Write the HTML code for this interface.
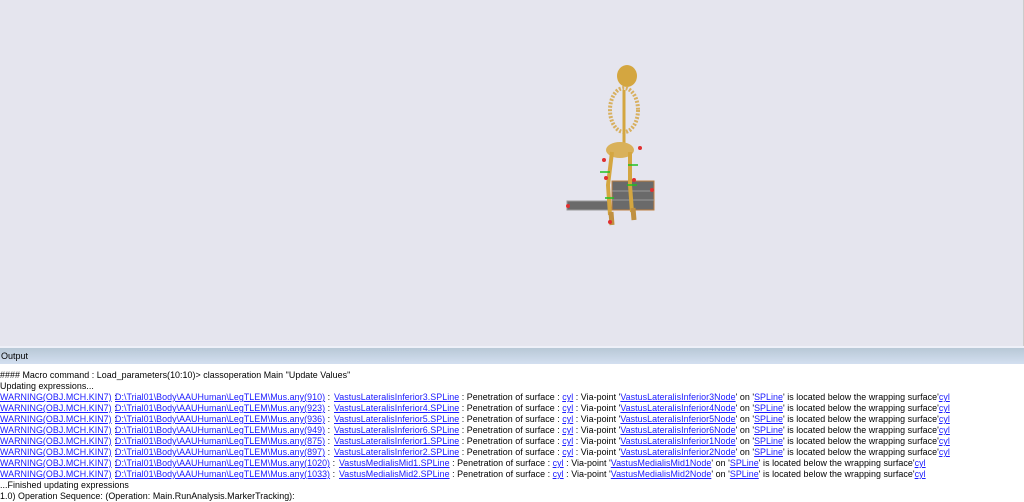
<!DOCTYPE html>
<html><head><style>
body{margin:0;width:1024px;height:500px;overflow:hidden;background:#fff;font-family:"Liberation Sans","Noto Sans CJK SC",sans-serif;}
#vp{position:absolute;left:0;top:0;width:1024px;height:346px;background:#e5e5ee;border-right:1px solid #ccc;box-sizing:border-box}
#sep{position:absolute;left:0;top:346px;width:1024px;height:2px;background:#eef0f8}
#hdr{position:absolute;left:0;top:348px;width:1024px;height:16px;background:linear-gradient(#b8c8d6,#d3dff0);font-size:9px;line-height:16px;padding-left:1px;color:#000}
.l{position:absolute;left:0;font-size:8.9px;white-space:nowrap;color:#000;height:11px;line-height:11px;letter-spacing:0.05px}
.l span{position:absolute;top:0}
a{color:#1a1aff;text-decoration:underline}
</style></head><body>
<div id="vp">
<svg width="1024" height="346" style="position:absolute;left:0;top:0">
 <rect x="567" y="201" width="42" height="9" fill="#6a6a6a" stroke="#999" stroke-width="1"/>
 <rect x="612" y="181" width="42" height="29" fill="#6a6a6a" stroke="#c08040" stroke-width="1"/>
 <line x1="612" y1="191" x2="654" y2="191" stroke="#999"/>
 <line x1="612" y1="200" x2="654" y2="200" stroke="#999"/>
 <ellipse cx="627" cy="76" rx="10" ry="11" fill="#d4a640"/>
 <ellipse cx="624" cy="110" rx="14" ry="22" fill="none" stroke="#d8b060" stroke-width="4" stroke-dasharray="2 1.5"/>
 <line x1="624" y1="90" x2="624" y2="145" stroke="#d4a640" stroke-width="3"/>
 <ellipse cx="620" cy="150" rx="14" ry="8" fill="#d9b15a"/>
 <path d="M612 152 L608 185 L610 215 M630 152 L630 185 L632 212" stroke="#d4a640" stroke-width="4" fill="none"/>
 <path d="M611 212 L612 225 M633 208 L634 220" stroke="#c09040" stroke-width="5"/>
 <g fill="#e03030"><circle cx="604" cy="160" r="2"/><circle cx="640" cy="148" r="2"/><circle cx="606" cy="178" r="2"/><circle cx="634" cy="180" r="2"/><circle cx="568" cy="206" r="2"/><circle cx="610" cy="222" r="2"/><circle cx="652" cy="190" r="2"/></g>
 <g stroke="#20c020" stroke-width="1.5"><line x1="600" y1="172" x2="610" y2="172"/><line x1="627" y1="185" x2="637" y2="185"/><line x1="605" y1="198" x2="614" y2="198"/><line x1="628" y1="165" x2="638" y2="165"/></g>
</svg>
</div>
<div id="sep"></div>
<div id="hdr">Output</div>
<div class="l" style="top:370px">#### Macro command : Load_parameters(10:10)&gt; classoperation Main "Update Values"</div>
<div class="l" style="top:381px">Updating expressions...</div>
<div class="l" style="top:392px"><span style="left:0"><a>WARNING(OBJ.MCH.KIN7)</a> :</span><span style="left:115px"><a>D:\Trial01\Body\AAUHuman\LegTLEM\Mus.any(910)</a> :</span><span style="left:334px"><a>VastusLateralisInferior3.SPLine</a> : Penetration of surface : <a>cyl</a> : Via-point '<a>VastusLateralisInferior3Node</a>' on '<a>SPLine</a>' is located below the wrapping surface'<a>cyl</a></span></div>
<div class="l" style="top:403px"><span style="left:0"><a>WARNING(OBJ.MCH.KIN7)</a> :</span><span style="left:115px"><a>D:\Trial01\Body\AAUHuman\LegTLEM\Mus.any(923)</a> :</span><span style="left:334px"><a>VastusLateralisInferior4.SPLine</a> : Penetration of surface : <a>cyl</a> : Via-point '<a>VastusLateralisInferior4Node</a>' on '<a>SPLine</a>' is located below the wrapping surface'<a>cyl</a></span></div>
<div class="l" style="top:414px"><span style="left:0"><a>WARNING(OBJ.MCH.KIN7)</a> :</span><span style="left:115px"><a>D:\Trial01\Body\AAUHuman\LegTLEM\Mus.any(936)</a> :</span><span style="left:334px"><a>VastusLateralisInferior5.SPLine</a> : Penetration of surface : <a>cyl</a> : Via-point '<a>VastusLateralisInferior5Node</a>' on '<a>SPLine</a>' is located below the wrapping surface'<a>cyl</a></span></div>
<div class="l" style="top:425px"><span style="left:0"><a>WARNING(OBJ.MCH.KIN7)</a> :</span><span style="left:115px"><a>D:\Trial01\Body\AAUHuman\LegTLEM\Mus.any(949)</a> :</span><span style="left:334px"><a>VastusLateralisInferior6.SPLine</a> : Penetration of surface : <a>cyl</a> : Via-point '<a>VastusLateralisInferior6Node</a>' on '<a>SPLine</a>' is located below the wrapping surface'<a>cyl</a></span></div>
<div class="l" style="top:436px"><span style="left:0"><a>WARNING(OBJ.MCH.KIN7)</a> :</span><span style="left:115px"><a>D:\Trial01\Body\AAUHuman\LegTLEM\Mus.any(875)</a> :</span><span style="left:334px"><a>VastusLateralisInferior1.SPLine</a> : Penetration of surface : <a>cyl</a> : Via-point '<a>VastusLateralisInferior1Node</a>' on '<a>SPLine</a>' is located below the wrapping surface'<a>cyl</a></span></div>
<div class="l" style="top:447px"><span style="left:0"><a>WARNING(OBJ.MCH.KIN7)</a> :</span><span style="left:115px"><a>D:\Trial01\Body\AAUHuman\LegTLEM\Mus.any(897)</a> :</span><span style="left:334px"><a>VastusLateralisInferior2.SPLine</a> : Penetration of surface : <a>cyl</a> : Via-point '<a>VastusLateralisInferior2Node</a>' on '<a>SPLine</a>' is located below the wrapping surface'<a>cyl</a></span></div>
<div class="l" style="top:458px"><span style="left:0"><a>WARNING(OBJ.MCH.KIN7)</a> :</span><span style="left:115px"><a>D:\Trial01\Body\AAUHuman\LegTLEM\Mus.any(1020)</a> :</span><span style="left:339px"><a>VastusMedialisMid1.SPLine</a> : Penetration of surface : <a>cyl</a> : Via-point '<a>VastusMedialisMid1Node</a>' on '<a>SPLine</a>' is located below the wrapping surface'<a>cyl</a></span></div>
<div class="l" style="top:469px"><span style="left:0"><a>WARNING(OBJ.MCH.KIN7)</a> :</span><span style="left:115px"><a>D:\Trial01\Body\AAUHuman\LegTLEM\Mus.any(1033)</a> :</span><span style="left:339px"><a>VastusMedialisMid2.SPLine</a> : Penetration of surface : <a>cyl</a> : Via-point '<a>VastusMedialisMid2Node</a>' on '<a>SPLine</a>' is located below the wrapping surface'<a>cyl</a></span></div>
<div class="l" style="top:480px">...Finished updating expressions</div>
<div class="l" style="top:491px">1.0) Operation Sequence: (Operation: Main.RunAnalysis.MarkerTracking):</div>
</body></html>
